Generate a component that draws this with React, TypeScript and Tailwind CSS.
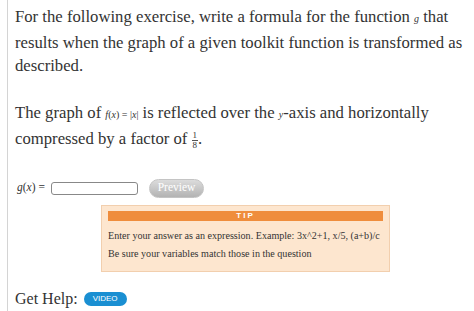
import React from 'react';

const serif = { fontFamily: '"Liberation Serif", "Times New Roman", serif' };
const sans = { fontFamily: '"Liberation Sans", Arial, sans-serif' };

export default function App() {
  return (
    <div className="w-[474px] h-[311px] bg-white overflow-hidden" style={serif}>
      <div className="ml-[7px] h-full border-l border-[#d4d4d4] pl-[7px] pt-[5px] text-[#333]">
        <p className="h-[71px] text-[16.7px] leading-[23.5px] pr-1">
          For the following exercise, write a formula for the function{' '}
          <span className="italic text-[10px]">g</span> that results when the graph of a given toolkit function is
          transformed as described.
        </p>

        <p className="h-[47px] text-[16.7px] leading-[23.5px] mt-[25px]">
          The graph of{' '}
          <span className="text-[10px]">
            <span className="italic">f</span>(<span className="italic">x</span>) = |<span className="italic">x</span>|
          </span>{' '}
          is reflected over the <span className="italic text-[10px]">y</span>-axis and horizontally compressed by a
          factor of{' '}
          <span className="inline-flex flex-col items-center align-[6px] h-[18px] -my-[5px] text-[9px] leading-[9px]">
            <span>1</span>
            <span className="border-t border-[#555] px-[1px]">8</span>
          </span>
          .
        </p>

        <div className="flex items-center mt-[30px] h-[20px]">
          <span className="text-[11.5px] ml-[2px] w-[34px]">
            <span className="italic">g</span>(<span className="italic">x</span>) =
          </span>
          <div className="w-[87px] h-[13px] border border-[#888] rounded-[3px] bg-white" />
          <div className="ml-[11px] w-[55px] h-[19px] rounded-full bg-gradient-to-b from-[#dcdcdc] to-[#b3b3b3] border border-[#c4c4c4] text-white text-[11.5px] flex items-center justify-center">
            Preview
          </div>
        </div>

        <div className="ml-[86px] mt-[7px] w-[289px] h-[67px] bg-[#fde6cf] border border-[#f2cfae] px-[6px] pt-[5px]">
          <div
            className="h-[10px] bg-[#ef8d3d] text-white text-[8px] font-bold tracking-[2px] flex items-center justify-center"
            style={sans}
          >
            TIP
          </div>
          <p className="text-[10.1px] leading-[18px] mt-[6px] text-[#333] whitespace-nowrap">
            Enter your answer as an expression. Example: 3x^2+1, x/5, (a+b)/c
          </p>
          <p className="text-[10.1px] leading-[18px] text-[#333] whitespace-nowrap">
            Be sure your variables match those in the question
          </p>
        </div>

        <div className="flex items-center mt-[16px]">
          <span className="text-[16px] leading-[22px]">Get Help:</span>
          <span
            className="ml-[6px] h-[14px] px-[9px] rounded-full bg-[#1a8fd2] text-white text-[8px] flex items-center"
            style={sans}
          >
            VIDEO
          </span>
        </div>
      </div>
    </div>
  );
}
